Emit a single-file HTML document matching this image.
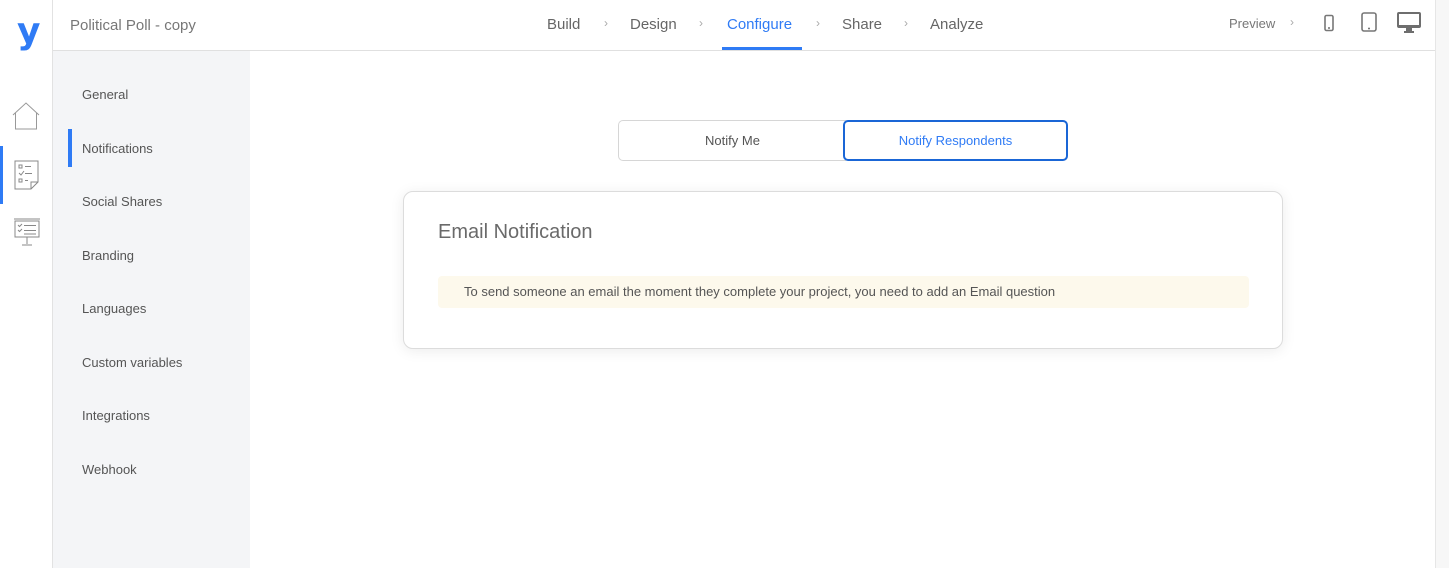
<!DOCTYPE html>
<html><head><meta charset="utf-8"><style>
*{margin:0;padding:0;box-sizing:border-box}
body{width:1449px;height:568px;overflow:hidden;background:#fff;font-family:"Liberation Sans",sans-serif;position:relative;color:#555}
.abs{position:absolute}
.rail{left:0;top:0;width:53px;height:568px;border-right:1px solid #e2e2e2;background:#fff}
.top{left:53px;top:0;width:1382px;height:51px;border-bottom:1px solid #e0e0e0;background:#fff}
.side{left:53px;top:51px;width:197px;height:517px;background:#f4f5f7}
.side div{position:absolute;left:29px;font-size:13px;color:#555}
.nav{top:15px;font-size:15px;color:#666}
.chev{top:16px;font-size:12px;color:#aaa}
.scroll{left:1435px;top:0;width:14px;height:568px;background:#f7f7f7;border-left:1px solid #e6e6e6}
</style></head><body>
<div class="abs rail"></div>
<div class="abs" style="left:17px;top:12px;font-size:36px;font-weight:bold;color:#2f7bf5;font-family:'DejaVu Sans',sans-serif;line-height:40px">y</div>
<svg class="abs" style="left:12px;top:102px" width="28" height="28" viewBox="0 0 28 28" fill="none" stroke="#999" stroke-width="1"><path d="M1 13 L14 1 L27 13 M3.5 11 V27 H24.5 V11"/></svg>
<div class="abs" style="left:0;top:146px;width:3px;height:58px;background:#2f7bf5"></div>
<svg class="abs" style="left:14px;top:160px" width="26" height="30" viewBox="0 0 26 30" fill="none" stroke="#888" stroke-width="1"><path d="M1 1 H24 V22 L17 29 H1 Z M17 29 V22 H24"/><rect x="5" y="5" width="3" height="3"/><path d="M11 6.5 H17 M5 13 L7 15 L10 11 M11 13.5 H18"/><rect x="5" y="19" width="3" height="3"/><path d="M11 20.5 H14"/></svg>
<svg class="abs" style="left:13px;top:218px" width="28" height="30" viewBox="0 0 28 30" fill="none" stroke="#888" stroke-width="1"><path d="M1 1 H27 M2 3 H26 V19 H2 Z M14 19 V26 M9 27 H19 M5 7 L6.5 8.5 L9 6 M11 7.5 H23 M5 12 L6.5 13.5 L9 11 M11 12.5 H23 M11 16 H23"/></svg>

<div class="abs top"></div>
<div class="abs" style="left:70px;top:17px;font-size:15px;color:#777">Political Poll - copy</div>
<div class="abs nav" style="left:547px;top:16px">Build</div>
<div class="abs chev" style="left:604px">›</div>
<div class="abs nav" style="left:630px;top:16px">Design</div>
<div class="abs chev" style="left:699px">›</div>
<div class="abs nav" style="left:727px;top:16px;color:#2f7bf5">Configure</div>
<div class="abs" style="left:722px;top:47px;width:80px;height:3px;background:#2f7bf5"></div>
<div class="abs chev" style="left:816px">›</div>
<div class="abs nav" style="left:842px;top:16px">Share</div>
<div class="abs chev" style="left:904px">›</div>
<div class="abs nav" style="left:930px;top:16px">Analyze</div>
<div class="abs" style="left:1229px;top:16px;font-size:13px;color:#777">Preview</div>
<div class="abs chev" style="left:1290px;top:15px">›</div>
<svg class="abs" style="left:1323px;top:14px" width="12" height="18" viewBox="0 0 12 18" fill="none" stroke="#777" stroke-width="1.6"><rect x="2" y="1.5" width="8" height="15" rx="1.5"/><path d="M5 14 H7"/></svg>
<svg class="abs" style="left:1360px;top:12px" width="18" height="20" viewBox="0 0 18 20" fill="none" stroke="#777" stroke-width="1.6"><rect x="2" y="1" width="14" height="18" rx="2"/><path d="M8 16.5 H10"/></svg>
<svg class="abs" style="left:1396px;top:11px" width="26" height="23" viewBox="0 0 26 23" fill="#6e6e6e"><rect x="1" y="1" width="24" height="16" rx="2"/><rect x="3" y="3" width="20" height="11" fill="#fff"/><rect x="10" y="17" width="6" height="4"/><rect x="8" y="20" width="10" height="2"/></svg>

<div class="abs scroll"></div>

<div class="abs side">
<div style="top:36px">General</div>
<div style="left:15px;top:78px;width:4px;height:38px;background:#2f7bf5"></div>
<div style="top:90px">Notifications</div>
<div style="top:143px">Social Shares</div>
<div style="top:197px">Branding</div>
<div style="top:250px">Languages</div>
<div style="top:304px">Custom variables</div>
<div style="top:357px">Integrations</div>
<div style="top:411px">Webhook</div>
</div>

<div class="abs" style="left:618px;top:120px;width:228px;height:41px;border:1px solid #d6d6d6;border-right:none;border-radius:5px 0 0 5px;font-size:13px;color:#555;text-align:center;line-height:39px">Notify Me</div>
<div class="abs" style="left:843px;top:120px;width:225px;height:41px;border:2px solid #1a66d6;border-radius:5px;font-size:13px;color:#2f7bf5;text-align:center;line-height:37px">Notify Respondents</div>

<div class="abs" style="left:403px;top:191px;width:880px;height:158px;border:1px solid #dcdcdc;border-radius:10px;box-shadow:0 2px 14px rgba(0,0,0,0.08);background:#fff">
<div class="abs" style="left:34px;top:29px;font-size:20px;color:#6a6a6a">Email Notification</div>
<div class="abs" style="left:34px;top:84px;width:811px;height:32px;background:#fdf9ec;border-radius:4px;font-size:13px;color:#555;line-height:32px;padding-left:26px">To send someone an email the moment they complete your project, you need to add an Email question</div>
</div>
</body></html>
